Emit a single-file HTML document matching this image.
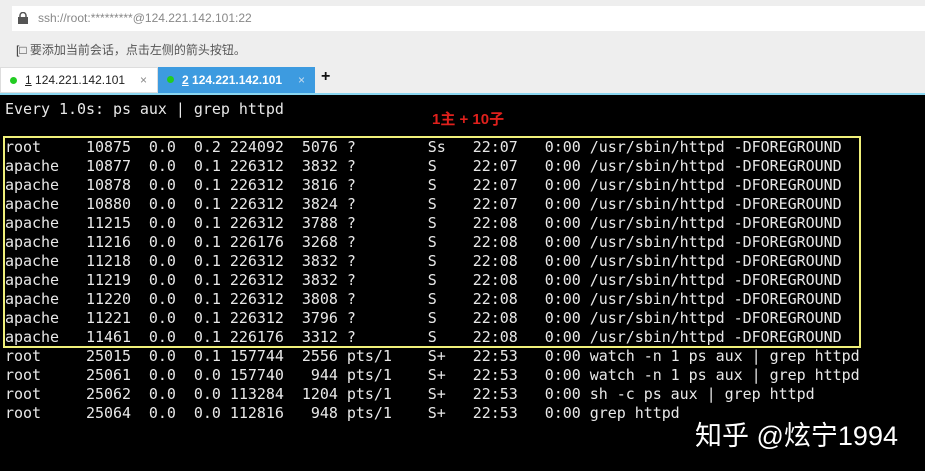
<!DOCTYPE html>
<html><head><meta charset="utf-8"><style>
*{margin:0;padding:0;box-sizing:border-box}
body{width:925px;height:471px;overflow:hidden;background:#eee;position:relative;font-family:"Liberation Sans","Noto Sans CJK SC",sans-serif}
.url{position:absolute;left:12px;top:6px;width:913px;height:25px;background:#fff;font-size:12px;color:#888;line-height:25px;padding-left:26px}
.lock{position:absolute;left:6px;top:6px;width:10px;height:12px}
.hint{position:absolute;left:16px;top:41px;font-size:12px;color:#555}
.tab1{position:absolute;left:0;top:67px;width:158px;height:26px;background:#fff;border:1px solid #ddd;font-size:12px;line-height:24px;padding-left:24px;color:#222}
.tab2{position:absolute;left:158px;top:67px;width:157px;height:26px;background:#3d9be0;font-size:12px;line-height:26px;padding-left:24px;color:#fff;font-weight:bold}
.dot{position:absolute;left:9px;top:9px;width:7px;height:7px;border-radius:50%;background:#2c2}
.x{position:absolute;right:10px;top:0;color:#888;font-weight:normal}
.plus{position:absolute;left:321px;top:68px;font-size:16px;font-weight:bold;color:#111}
.line{position:absolute;left:0;top:93px;width:925px;height:2px;background:#8ad6f0}
.term{position:absolute;left:0;top:95px;width:925px;height:376px;background:#000}
pre{position:absolute;left:5px;font-family:"DejaVu Sans Mono",monospace;font-size:15px;letter-spacing:-0.035px;line-height:19px;color:#e8e8e8}
.box{position:absolute;left:3px;top:136px;width:858px;height:212px;border:2px solid #f0f07a}
.red{position:absolute;left:432px;top:108px;color:#e0201c;font-size:15px;font-weight:bold}
.wm{position:absolute;left:695px;top:414px;color:#fff;font-size:27px;font-family:"Liberation Sans","Noto Sans CJK SC",sans-serif}
</style></head><body>
<div class="url"><svg class="lock" viewBox="0 0 10 12"><path d="M2 5V3.5a3 3 0 0 1 6 0V5" fill="none" stroke="#555" stroke-width="1.5"/><rect x="0" y="5" width="10" height="7" fill="#555"/></svg>ssh://root:*********@124.221.142.101:22</div>
<div class="hint"><span style="color:#333">[□</span> 要添加当前会话，点击左侧的箭头按钮。</div>
<div class="tab1"><span class="dot"></span><u>1</u> 124.221.142.101<span class="x">×</span></div>
<div class="tab2"><span class="dot"></span><u>2</u> 124.221.142.101<span class="x" style="color:#cde">×</span></div>
<div class="plus">+</div>
<div class="line"></div>
<div class="term"></div>
<pre style="top:100px">Every 1.0s: ps aux | grep httpd</pre>
<div class="red">1主 + 10子</div>
<div class="box"></div>
<pre style="top:138px">root     10875  0.0  0.2 224092  5076 ?        Ss   22:07   0:00 /usr/sbin/httpd -DFOREGROUND
apache   10877  0.0  0.1 226312  3832 ?        S    22:07   0:00 /usr/sbin/httpd -DFOREGROUND
apache   10878  0.0  0.1 226312  3816 ?        S    22:07   0:00 /usr/sbin/httpd -DFOREGROUND
apache   10880  0.0  0.1 226312  3824 ?        S    22:07   0:00 /usr/sbin/httpd -DFOREGROUND
apache   11215  0.0  0.1 226312  3788 ?        S    22:08   0:00 /usr/sbin/httpd -DFOREGROUND
apache   11216  0.0  0.1 226176  3268 ?        S    22:08   0:00 /usr/sbin/httpd -DFOREGROUND
apache   11218  0.0  0.1 226312  3832 ?        S    22:08   0:00 /usr/sbin/httpd -DFOREGROUND
apache   11219  0.0  0.1 226312  3832 ?        S    22:08   0:00 /usr/sbin/httpd -DFOREGROUND
apache   11220  0.0  0.1 226312  3808 ?        S    22:08   0:00 /usr/sbin/httpd -DFOREGROUND
apache   11221  0.0  0.1 226312  3796 ?        S    22:08   0:00 /usr/sbin/httpd -DFOREGROUND
apache   11461  0.0  0.1 226176  3312 ?        S    22:08   0:00 /usr/sbin/httpd -DFOREGROUND
root     25015  0.0  0.1 157744  2556 pts/1    S+   22:53   0:00 watch -n 1 ps aux | grep httpd
root     25061  0.0  0.0 157740   944 pts/1    S+   22:53   0:00 watch -n 1 ps aux | grep httpd
root     25062  0.0  0.0 113284  1204 pts/1    S+   22:53   0:00 sh -c ps aux | grep httpd
root     25064  0.0  0.0 112816   948 pts/1    S+   22:53   0:00 grep httpd</pre>
<div class="wm">知乎 @炫宁1994</div>
</body></html>
